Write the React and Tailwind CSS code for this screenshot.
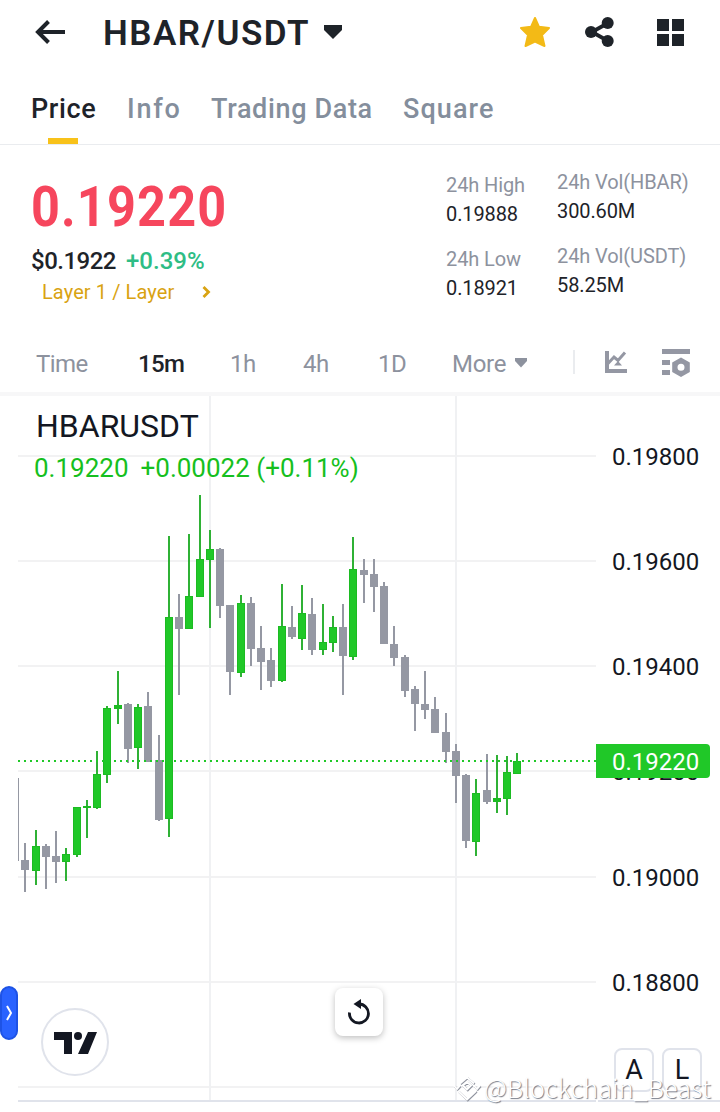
const tabs = [
  { name: 'Price', width: 'w-[96px]', tracking: 'tracking-[0.6px]', active: true },
  { name: 'Info', width: 'w-[84px]', tracking: 'tracking-[1.8px]' },
  { name: 'Trading Data', width: 'w-[192px]', tracking: 'tracking-[0.65px]' },
  { name: 'Square', width: 'w-[110px]', tracking: 'tracking-[1.1px]' },
];

const intervals = [
  { name: 'Time', width: 'w-[102px]' },
  { name: '15m', width: 'w-[92px]', active: true },
  { name: '1h', width: 'w-[73px]' },
  { name: '4h', width: 'w-[75px]' },
  { name: '1D', width: 'w-[74px]' },
];

// [left, wick top, body top, body bottom, wick bottom, rising]
const candles = [
  [21, 843, 860, 870, 892, 0],
  [32, 830, 846, 871, 885, 1],
  [42, 844, 846, 857, 889, 0],
  [52, 831, 856, 862, 883, 0],
  [62, 848, 854, 862, 881, 1],
  [73, 807, 807, 855, 857, 1],
  [83, 800, 806, 808, 838, 1],
  [93, 751, 774, 808, 809, 1],
  [103, 706, 708, 775, 783, 1],
  [114, 671, 705, 709, 724, 1],
  [124, 703, 704, 749, 763, 0],
  [134, 704, 707, 748, 769, 1],
  [144, 692, 706, 762, 762, 0],
  [155, 735, 760, 820, 821, 0],
  [165, 536, 617, 819, 837, 1],
  [175, 594, 617, 629, 695, 0],
  [185, 534, 596, 629, 629, 1],
  [196, 495, 559, 597, 597, 1],
  [206, 530, 549, 560, 628, 1],
  [216, 548, 549, 606, 618, 0],
  [226, 605, 605, 672, 695, 0],
  [237, 595, 603, 673, 677, 1],
  [247, 597, 603, 649, 666, 0],
  [257, 626, 648, 662, 690, 0],
  [267, 648, 660, 681, 687, 0],
  [278, 584, 626, 681, 682, 1],
  [288, 606, 627, 637, 639, 0],
  [298, 585, 613, 639, 650, 1],
  [308, 598, 614, 650, 655, 0],
  [319, 604, 642, 650, 655, 1],
  [329, 616, 627, 643, 652, 1],
  [339, 604, 627, 656, 695, 0],
  [349, 537, 569, 657, 660, 1],
  [360, 559, 570, 575, 603, 0],
  [370, 559, 574, 587, 612, 0],
  [380, 582, 586, 644, 644, 0],
  [390, 626, 644, 658, 666, 0],
  [401, 655, 657, 691, 697, 0],
  [411, 686, 689, 704, 731, 0],
  [421, 671, 704, 710, 719, 0],
  [431, 697, 709, 733, 733, 0],
  [442, 713, 732, 752, 763, 0],
  [452, 744, 751, 776, 803, 0],
  [462, 774, 775, 841, 848, 0],
  [472, 779, 793, 842, 856, 1],
  [483, 754, 790, 802, 804, 0],
  [493, 755, 798, 802, 813, 1],
  [503, 756, 772, 799, 815, 1],
  [513, 753, 761, 774, 774, 1],
];

const gridRows = [455, 560, 665, 770, 876, 981, 1086];
const prices = ['0.19800', '0.19600', '0.19400', '0.19200', '0.19000', '0.18800'];

const markPath = 'm7 7.500 7-6 7 6M10 9.500l4-3.500 4 3.500-4 4zM1 9.500l3 3.500 3-3.500M21 9.500l3 3.500 3-3.500M5 15l9 8.500 9-8.500';

function Header() {
  return (
    <header className="flex h-16 items-center pl-[35px] pr-[36px]">
      <svg width="30" height="24" viewBox="0 0 30 24" fill="none" stroke="#1e2329" strokeWidth="4">
        <path d="M13.5 1.5 3 12l10.500 10.500M3 12h27" />
      </svg>
      <h1 className="ml-[38px] mt-[5px] w-[219px] whitespace-nowrap text-[35px] font-semibold tracking-[1.5px]">
        HBAR/USDT
      </h1>
      <svg className="ml-px" width="20" height="15" viewBox="0 0 20 15" fill="#1e2329">
        <path d="M1 0h18v5l-9 9L1 5z" />
      </svg>
      <div className="ml-auto flex items-center">
        <svg width="30" height="30" viewBox="0 0 30 30" fill="#f3ba16" stroke="#f3ba16" strokeWidth="2" strokeLinejoin="round">
          <path d="m15 1 4 8.800 10 1.200-7 7 2.500 11-9.500-4.500L5.500 29 8 18l-7-7 10-1.200z" />
        </svg>
        <svg className="ml-[35px]" width="30" height="30" viewBox="0 0 30 30" fill="#1e2329">
          <path d="M23 6 7 15l16 9" fill="none" stroke="#1e2329" strokeWidth="3.800" />
          <circle cx="6" cy="15" r="6" />
          <circle cx="22.700" cy="6" r="6" />
          <circle cx="22.700" cy="24" r="6" />
        </svg>
        <div className="ml-[42px] grid grid-cols-2 gap-[3px]">
          {[0, 1, 2, 3].map(i => (
            <span key={i} className="h-3 w-3 bg-[#1e2329]" />
          ))}
        </div>
      </div>
    </header>
  );
}

function Tabs() {
  return (
    <nav className="flex h-[81px] border-b border-[#eaecef] pl-[31px] text-[27px] font-medium">
      {tabs.map(tab => (
        <div key={tab.name} className={`flex flex-col ${tab.width} ${tab.tracking}`}>
          <span className={`h-[74px] whitespace-nowrap leading-[90px] ${tab.active ? 'text-[#1e2329]' : 'text-[#848e9c]'}`}>
            {tab.name}
          </span>
          {tab.active && <span className="ml-[17px] h-[6px] w-[30px] bg-[#f8c21a]" />}
        </div>
      ))}
    </nav>
  );
}

function Stat({ label, value }) {
  return (
    <div className="whitespace-nowrap leading-[29px]">
      <div className="text-[20px] tracking-[-0.1px] text-[#8d929e]">{label}</div>
      <div className="text-[20px] tracking-[-0.1px]">{value}</div>
    </div>
  );
}

function Summary() {
  return (
    <section className="flex h-[189px] pl-[31px]">
      <div className="w-[415px] pt-[32px]">
        <div className="origin-left scale-x-90 text-[56px] font-bold leading-[60px] tracking-[1.300px] text-[#f6465d]">
          0.19220
        </div>
        <div className="flex h-[47px] items-center text-[24px] font-medium">
          <span className="w-[95px] tracking-[-0.5px]">$0.1922</span>
          <span className="text-[#2ebd85]">+0.39%</span>
        </div>
        <div className="flex h-4 items-center pl-[11px] text-[20px] text-[#d9a312]">
          <span className="w-[160px] tracking-[0.1px]">Layer 1 / Layer</span>
          <svg width="9" height="14" viewBox="0 0 9 14" fill="none" stroke="#d9a312" strokeWidth="2.800">
            <path d="m1.500 2 5 5-5 5" />
          </svg>
        </div>
      </div>
      <div className="flex w-[111px] flex-col gap-4 pt-[26px]">
        <Stat label="24h High" value="0.19888" />
        <Stat label="24h Low" value="0.18921" />
      </div>
      <div className="flex flex-col gap-4 pt-[23px]">
        <Stat label="24h Vol(HBAR)" value="300.60M" />
        <Stat label="24h Vol(USDT)" value="58.25M" />
      </div>
    </section>
  );
}

function Intervals() {
  return (
    <section className="flex h-[62px] items-center border-b-4 border-[#f7f7f8] pl-9 text-[24px] text-[#8d929e]">
      {intervals.map(item => (
        <span
          key={item.name}
          className={`pt-[2px] tracking-[-0.6px] ${item.width} ${item.active ? 'font-medium text-[#1e2329]' : ''}`}
        >
          {item.name}
        </span>
      ))}
      <span className="w-[62px] pt-[2px] tracking-[-0.3px]">More</span>
      <svg width="14" height="10" viewBox="0 0 14 10" fill="#8d929e">
        <path d="M1 0h12v3L7 9.500 1 3z" />
      </svg>
      <span className="mb-[2px] ml-[45px] h-6 w-[2px] bg-[#eaecef]" />
      <svg className="mb-[2px] ml-[30px]" width="22" height="22" viewBox="0 0 22 22" fill="none" stroke="#9497a3" strokeWidth="3">
        <path d="M2 0v20h20" strokeWidth="4" />
        <path d="m3 12.500 6-6.500 4 3.500 7-8" />
        <path d="M9 14.500h8L13 10z" fill="#9497a3" stroke="none" />
      </svg>
      <svg className="ml-[35px]" width="28" height="30" viewBox="0 0 28 30" fill="#9497a3">
        <path d="M0 1h28v5H0zM0 12h8v5H0zM0 22h8v5H0z" />
        <path d="m19 9.500 8.800 5v9.500l-8.800 5-8.800-5v-9.500zm0 6.300a3.500 3.500 0 1 0 0 7 3.500 3.500 0 0 0 0-7z" fillRule="evenodd" />
      </svg>
    </section>
  );
}

function Candle({ data }) {
  const [x, high, top, bottom, low, rising] = data;
  return (
    <g>
      <rect x={x + 3} y={high} width="2" height={low - high} fill={rising ? '#2fb135' : '#9598a3'} />
      <rect x={x} y={top} width="8" height={bottom - top} fill={rising ? '#1cbb22' : '#9598a3'} />
      {rising === 1 && bottom - top > 4 && (
        <rect x={x + 1} y={top + 1} width="6" height={bottom - top - 2} fill="#20c828" />
      )}
    </g>
  );
}

function Chart() {
  return (
    <section className="relative h-[716px]">
      <svg className="block" width="720" height="716" viewBox="0 396 720 716" shapeRendering="crispEdges">
        {gridRows.map(y => (
          <rect key={y} x="18" y={y} width="578" height="2" fill="#f2f2f3" />
        ))}
        <rect x="209" y="396" width="2" height="704" fill="#f0f1f3" />
        <rect x="455" y="396" width="2" height="704" fill="#f0f1f3" />
        <path d="M18 1101h578M598 1101h122" stroke="#e0e3eb" strokeWidth="2" />
        <rect x="18" y="778" width="1" height="83" fill="#9598a3" />
        {candles.map(c => (
          <Candle key={c[0]} data={c} />
        ))}
        <path d="M18 761h578" stroke="#20c828" strokeWidth="2" strokeDasharray="2 4" />
        <g className="text-[24px]" fill="#131722">
          {prices.map((price, i) => (
            <text key={price} x="612" y={gridRows[i] + 10}>{price}</text>
          ))}
        </g>
        <path d="M596 744h110a4 4 0 0 1 4 4v26a4 4 0 0 1-4 4H596z" fill="#20c828" shapeRendering="auto" />
        <text x="612" y="770" className="text-[24px]" fill="#fff">0.19220</text>
      </svg>

      <div className="absolute left-[34px] top-[10px] whitespace-nowrap">
        <div className="ml-[2px] text-[32px] leading-[40px] text-[#131722]">HBARUSDT</div>
        <div className="flex gap-3 text-[26px] leading-[44px] text-[#16bf20]">
          <span>0.19220</span>
          <span>+0.00022 (+0.11%)</span>
        </div>
      </div>

      <div className="absolute left-0 top-[590px] flex h-[54px] w-[18px] items-center justify-center rounded-[9px] border-2 border-[#1e53e5] bg-[#2962ff]">
        <svg width="6" height="16" viewBox="0 0 6 16" fill="none" stroke="#fff" strokeWidth="2">
          <path d="m1 1 4 7-4 7" />
        </svg>
      </div>

      <div className="absolute left-[41px] top-[612px] flex h-[68px] w-[68px] items-center justify-center rounded-full border-2 border-[#e0e3eb] bg-white pt-[2px]">
        <svg width="43" height="22" viewBox="0 0 43 22" fill="#131722">
          <path d="M0 0h18v22h-8V8H0zM34 0h9l-9 22h-10z" />
          <circle cx="24" cy="4" r="4" />
        </svg>
      </div>

      <button className="absolute left-[335px] top-[592px] flex h-12 w-12 items-center justify-center rounded-lg bg-white shadow-[0_2px_6px_rgba(0,0,0,0.25)]">
        <svg width="24" height="26" viewBox="0 0 24 26" fill="none" stroke="#131722" strokeWidth="2.800">
          <path d="M2.500 13.500A9.500 9.500 0 1 0 12 5" />
          <path d="M14 0v10L6.500 5z" fill="#131722" stroke="none" />
        </svg>
      </button>

      <div className="absolute left-[614px] top-[652px] flex gap-2 text-[27px] text-[#131722]">
        {['A', 'L'].map(label => (
          <span key={label} className="flex h-[44px] w-[40px] items-center justify-center rounded-lg border-2 border-[#e0e3eb] bg-white">
            {label}
          </span>
        ))}
      </div>

      <div className="absolute left-[453px] top-[678px] flex items-center gap-[3px] text-white">
        <svg className="overflow-visible" width="28" height="24" viewBox="0 0 28 24" fill="none">
          <path d={markPath} stroke="#8f939e" strokeWidth="2" transform="translate(0.8 0.8)" />
          <path d={markPath} stroke="#fff" strokeWidth="1.800" />
        </svg>
        <span className="whitespace-nowrap font-['Noto_Sans_CJK_SC',sans-serif] text-[25px] font-light leading-[27px] tracking-[0.2px] [text-shadow:1px_1px_1px_rgba(80,85,100,0.8)]">
          @Blockchain_Beast
        </span>
      </div>
    </section>
  );
}

export default function App() {
  return (
    <div className="h-[1112px] w-[720px] overflow-hidden bg-white font-[Roboto,sans-serif] text-[#1e2329]">
      <Header />
      <Tabs />
      <Summary />
      <Intervals />
      <Chart />
    </div>
  );
}
